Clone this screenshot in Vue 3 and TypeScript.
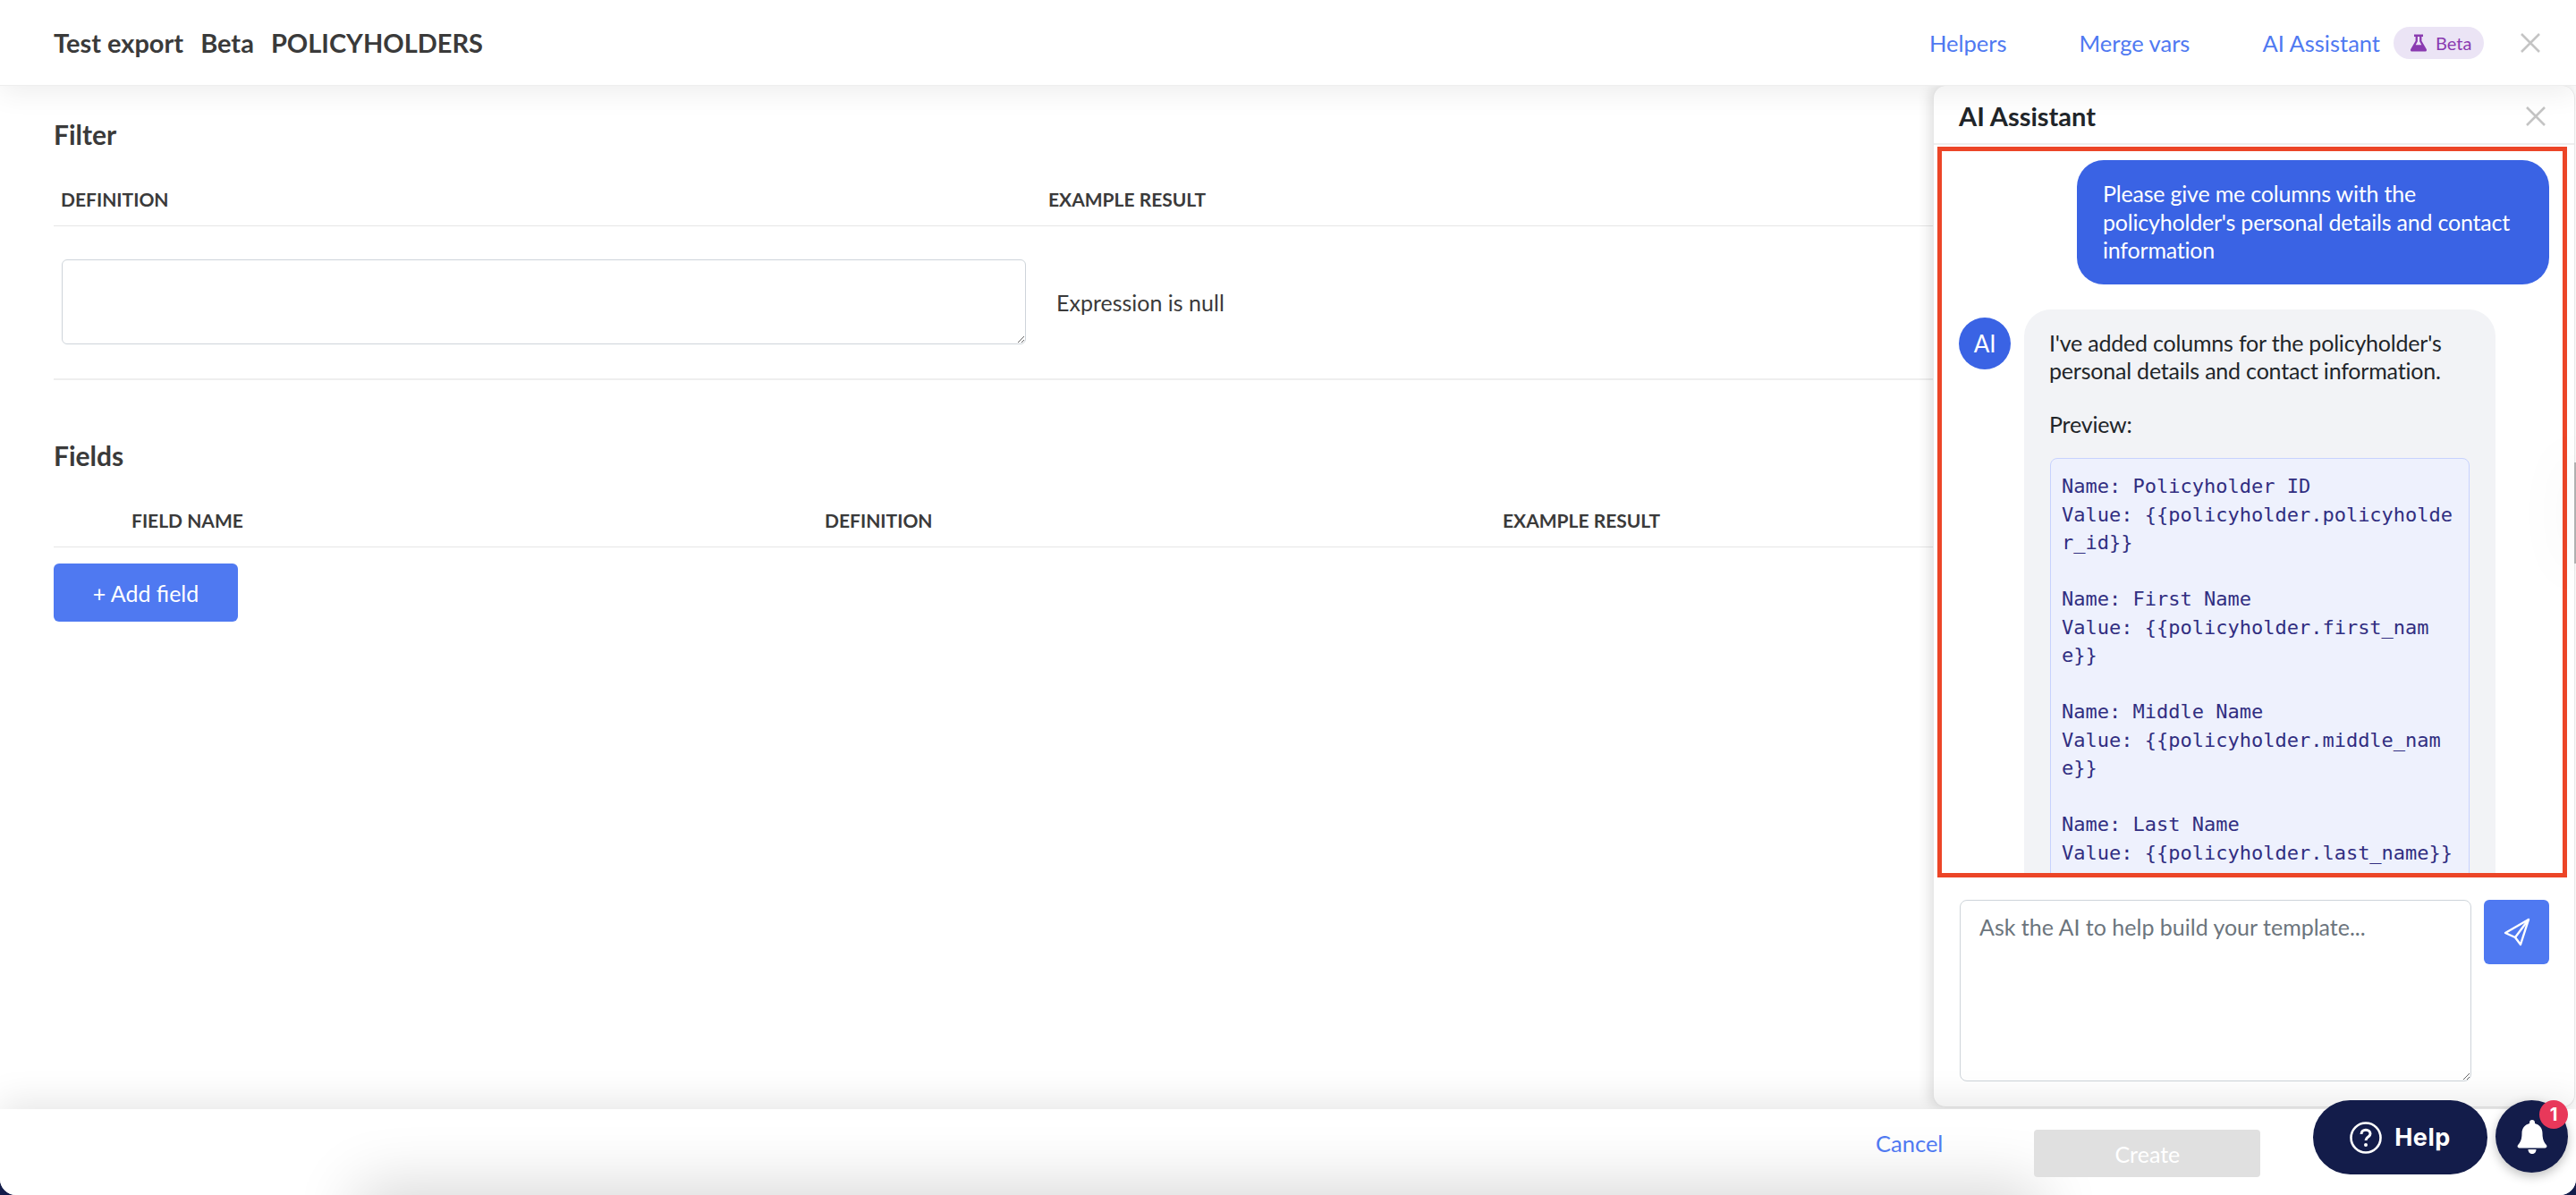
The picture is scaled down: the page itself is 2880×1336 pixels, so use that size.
<template>
  <div class="page">
    <header class="topbar">
      <div class="crumbs">
        <span>Test export</span>
        <span>Beta</span>
        <span>POLICYHOLDERS</span>
      </div>
      <nav class="tabs">
        <a class="tab">Helpers</a>
        <a class="tab">Merge vars</a>
        <a class="tab ai-tab">AI Assistant</a>
        <span class="beta-pill">
          <svg width="20" height="20" viewBox="0 0 20 20">
            <path fill="#8a3ab0" d="M5 0.5h10v2.6h-1.6v4.6l5.4 9.2c.7 1.3-.1 2.6-1.5 2.6H2.700c-1.400 0-2.200-1.300-1.500-2.600l5.400-9.200V3.100H5zM8.900 3.100v5.200L6.700 12.200h6.600l-2.200-3.900V3.100z" />
          </svg>
          Beta
        </span>
        <svg class="close top-close" viewBox="0 0 22 22"><path d="M1 1l20 20M21 1L1 21" /></svg>
      </nav>
    </header>

    <main class="content">
      <section class="filter">
        <h3>Filter</h3>
        <div class="thead filter-cols">
          <div>DEFINITION</div>
          <div>EXAMPLE RESULT</div>
        </div>
        <div class="filter-row filter-cols">
          <div><textarea class="def-input"></textarea></div>
          <div class="result">Expression is null</div>
        </div>
      </section>

      <section class="fields">
        <h3>Fields</h3>
        <div class="thead field-cols">
          <div></div>
          <div>FIELD NAME</div>
          <div>DEFINITION</div>
          <div>EXAMPLE RESULT</div>
        </div>
        <button class="add-btn">+ Add field</button>
      </section>
    </main>

    <aside class="panel">
      <div class="panel-head">
        <span>AI Assistant</span>
        <svg class="close" viewBox="0 0 22 22"><path d="M1 1l20 20M21 1L1 21" /></svg>
      </div>
      <div class="messages">
        <div class="user-msg">Please give me columns with the policyholder's personal details and contact information</div>
        <div class="ai-row">
          <div class="avatar">AI</div>
          <div class="ai-msg">
            <p class="intro">I've added columns for the policyholder's personal details and contact information.</p>
            <p class="label">Preview:</p>
            <pre class="preview">{{ previewText }}</pre>
          </div>
        </div>
      </div>
      <div class="composer">
        <textarea class="ask-input" placeholder="Ask the AI to help build your template..."></textarea>
        <button class="send-btn">
          <svg width="32" height="32" viewBox="0 0 32 32" fill="none" stroke="#fff" stroke-width="2.400" stroke-linejoin="round">
            <path d="M29 2L3 17l11 5 6 8z" />
            <path d="M29 2L14 22" />
          </svg>
        </button>
      </div>
    </aside>

    <div class="side-tab"></div>

    <footer class="bottombar">
      <div class="bottom-glow"></div>
      <a class="cancel">Cancel</a>
      <button class="create" disabled>Create</button>
    </footer>

    <button class="help-pill">
      <svg width="36" height="36" viewBox="0 0 36 36" fill="none">
        <circle cx="18" cy="18" r="16.500" stroke="#fff" stroke-width="2.600" />
        <path d="M13 14c0-3 2.300-4.800 5-4.800s5 1.800 5 4.300c0 3.700-5 3.600-5 7.500" stroke="#fff" stroke-width="3" />
        <circle cx="18" cy="26" r="2" fill="#fff" />
      </svg>
      Help
    </button>
    <button class="bell">
      <svg width="34" height="38" viewBox="0 0 34 38">
        <path fill="#fff" d="M17 0c1.800 0 3 1.200 3 3v1c5.500 1.300 8.500 5.700 8.500 11 0 6.500 1.500 10 4.300 13 1.300 1.500.5 3.500-1.500 3.500H2.700c-2 0-2.800-2-1.500-3.500C4 25 5.500 21.500 5.500 15 5.500 9.700 8.500 5.300 14 4V3c0-1.800 1.200-3 3-3z" />
        <path fill="#fff" d="M12.500 33h9c0 3-2 5-4.500 5s-4.500-2-4.500-5z" />
      </svg>
      <span class="bell-count">1</span>
    </button>
  </div>
</template>

<script setup lang="ts">
const previewText = [
  'Name: Policyholder ID',
  'Value: {{policyholder.policyholder_id}}',
  '',
  'Name: First Name',
  'Value: {{policyholder.first_name}}',
  '',
  'Name: Middle Name',
  'Value: {{policyholder.middle_name}}',
  '',
  'Name: Last Name',
  'Value: {{policyholder.last_name}}',
].join('\n')
</script>

<style>
html,
body {
  margin: 0;
  background: #131c4a;
}
</style>

<style scoped>
.page {
  position: relative;
  width: 2880px;
  height: 1336px;
  overflow: hidden;
  background: #fff;
  border-radius: 0 0 18px 18px;
  font-family: Lato, "Liberation Sans", sans-serif;
  color: #3a3a3a;
  display: flex;
  flex-direction: column;
}

/* top bar */
.topbar {
  position: relative;
  z-index: 3;
  flex: 0 0 96px;
  box-sizing: border-box;
  display: flex;
  align-items: center;
  justify-content: space-between;
  padding: 0 40px 0 60px;
  background: #fff;
  border-bottom: 1px solid #eee;
  box-shadow: 0 8px 30px rgba(0, 0, 0, 0.07);
}
.crumbs {
  display: flex;
  gap: 19px;
  font-size: 29px;
  font-weight: 700;
}
.tabs {
  display: flex;
  align-items: center;
  font-size: 25.500px;
  color: #4f79f1;
}
.tab {
  margin-right: 81px;
}
.ai-tab {
  margin-right: 15px;
}
.beta-pill {
  display: flex;
  align-items: center;
  gap: 9px;
  box-sizing: border-box;
  width: 101px;
  height: 36px;
  padding-left: 18px;
  margin-right: 41px;
  border-radius: 18px;
  background: #ebe4f5;
  color: #8a3ab0;
  font-size: 20px;
}
.close {
  width: 22px;
  height: 22px;
  fill: none;
  stroke: #c4c4c4;
  stroke-width: 2.500;
}

/* main area */
.content {
  flex: 1;
  padding: 0 719px 0 60px;
}
.filter {
  border-bottom: 2px solid #eee;
}
h3 {
  margin: 0;
  font-size: 30px;
  font-weight: 700;
  line-height: 36px;
}
.filter h3 {
  margin-top: 36px;
}
.fields h3 {
  margin-top: 66px;
}
.thead {
  display: grid;
  margin-top: 41px;
  padding-bottom: 15px;
  border-bottom: 1px solid #e6e6e6;
  font-size: 21px;
  font-weight: 700;
  line-height: 28px;
}
.thead > div {
  padding-left: 8px;
}
.filter-cols {
  grid-template-columns: 1104px 1fr;
}
.field-cols {
  grid-template-columns: 79px 775px 758px 1fr;
}
.filter-row {
  display: grid;
  align-items: center;
  padding: 37px 0 38px;
  font-size: 25px;
}
.filter-row > div {
  padding-left: 9px;
}
.def-input {
  display: block;
  box-sizing: border-box;
  width: 1078px;
  height: 95px;
  border: 1px solid #ced4da;
  border-radius: 6px;
  background: #fff;
}
.result {
  padding-left: 17px !important;
}
.add-btn {
  display: block;
  width: 206px;
  height: 65px;
  margin-top: 18px;
  border: none;
  border-radius: 6px;
  background: #4f79f1;
  color: #fff;
  font: 25px Lato, sans-serif;
}

/* AI panel */
.panel {
  position: absolute;
  z-index: 2;
  top: 96px;
  right: 1px;
  bottom: 98px;
  width: 718px;
  box-sizing: border-box;
  display: flex;
  flex-direction: column;
  background: #fff;
  border: 1px solid #e8e8e8;
  border-top: none;
  border-radius: 14px;
  box-shadow: -4px 0 14px rgba(0, 0, 0, 0.12);
}
.panel-head {
  flex: 0 0 66px;
  box-sizing: border-box;
  display: flex;
  align-items: center;
  justify-content: space-between;
  padding: 3px 32px 0 28px;
  border-bottom: 2px solid #eee;
  color: #212529;
  font-size: 29px;
  font-weight: 700;
}
.messages {
  flex: 0 0 817px;
  box-sizing: border-box;
  margin: 2px 8px 0 4px;
  padding: 10px 15px 0 0;
  border: 5px solid #ec4527;
  overflow: hidden;
  font-size: 25px;
  letter-spacing: -0.2px;
  line-height: 31.500px;
}
.user-msg {
  box-sizing: border-box;
  width: 528px;
  margin-left: auto;
  padding: 22px 29px;
  border-radius: 30px;
  background: #3a63e4;
  color: #fff;
}
.ai-row {
  display: flex;
  gap: 15px;
  margin-top: 28px;
  padding-left: 19px;
}
.avatar {
  flex: none;
  width: 58px;
  height: 58px;
  margin-top: 9px;
  border-radius: 50%;
  background: #3a63e4;
  color: #fff;
  text-align: center;
  line-height: 58px;
  font-size: 26px;
}
.ai-msg {
  width: 527px;
  box-sizing: border-box;
  padding: 22px 28px;
  border-radius: 30px;
  background: #f2f3f6;
  color: #212529;
}
.ai-msg p {
  margin: 0;
}
.ai-msg .intro {
  margin-bottom: 28px;
}
.ai-msg .label {
  margin-bottom: 22px;
}
.preview {
  margin: 0 1px;
  padding: 15px 12px;
  border: 1px solid #c7d2fe;
  border-radius: 8px;
  background: #eef1fd;
  color: #312e81;
  font-family: "DejaVu Sans Mono", monospace;
  font-size: 22px;
  letter-spacing: 0;
  line-height: 31.500px;
  white-space: pre-wrap;
  word-break: break-all;
}
.composer {
  display: flex;
  gap: 14px;
  padding: 25px 28px 0 29px;
}
.ask-input {
  display: block;
  box-sizing: border-box;
  width: 573px;
  height: 203px;
  padding: 13px 21px;
  border: 1px solid #ced4da;
  border-radius: 8px;
  background: #fff;
  font: 25px/32px Lato, sans-serif;
}
.ask-input::placeholder {
  color: #6c757d;
  opacity: 1;
}
.send-btn {
  width: 73px;
  height: 72px;
  padding: 0;
  border: none;
  border-radius: 6px;
  background: #4f79f1;
  display: flex;
  align-items: center;
  justify-content: center;
}

/* sliver of a widget peeking in from the window edge */
.side-tab {
  position: absolute;
  z-index: 2;
  top: 517px;
  right: 0;
  width: 2px;
  height: 113px;
  background: #b0b0b0;
  box-shadow: 0 0 60px 10px rgba(0, 0, 0, 0.05);
}

/* footer */
.bottombar {
  position: absolute;
  z-index: 3;
  left: 0;
  right: 0;
  bottom: 0;
  height: 96px;
  overflow: visible;
  background: #fff;
  box-shadow: 0 -8px 40px rgba(0, 0, 0, 0.1);
  display: flex;
  align-items: flex-start;
  font-size: 25.500px;
}
.bottom-glow {
  position: absolute;
  left: 440px;
  right: 640px;
  bottom: -40px;
  height: 10px;
  box-shadow: 0 0 70px 40px rgba(0, 0, 0, 0.16);
}
.cancel {
  position: relative;
  margin: 23px 0 0 2097px;
  color: #4f79f1;
}
.create {
  position: relative;
  width: 253px;
  height: 53px;
  margin: 23px 0 0 102px;
  border: none;
  border-radius: 4px;
  background: #e0e0e0;
  color: #fff;
  font: 25px Lato, sans-serif;
}

/* support widgets */
.help-pill {
  position: absolute;
  z-index: 4;
  left: 2586px;
  top: 1230px;
  width: 195px;
  height: 83px;
  padding: 0;
  border: none;
  border-radius: 42px;
  background: #131c4a;
  color: #fff;
  display: flex;
  align-items: center;
  justify-content: center;
  gap: 14px;
  font: 700 27px Inter, sans-serif;
  letter-spacing: 0.5px;
}
.bell {
  position: absolute;
  z-index: 4;
  left: 2790px;
  top: 1230px;
  width: 81px;
  height: 81px;
  padding: 0;
  border: none;
  border-radius: 50%;
  background: #131c4a;
  box-shadow: 0 4px 12px rgba(0, 0, 0, 0.25);
  display: flex;
  align-items: center;
  justify-content: center;
}
.bell-count {
  position: absolute;
  top: 0;
  right: 0;
  width: 32px;
  height: 32px;
  border-radius: 50%;
  background: #e8385a;
  color: #fff;
  font: 700 20px/32px Inter, sans-serif;
  text-align: center;
}
</style>
